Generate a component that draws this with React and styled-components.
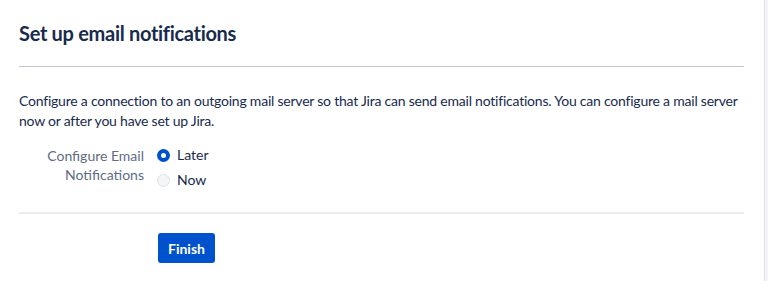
import React from "react";
import styled, { createGlobalStyle } from "styled-components";

const GlobalStyle = createGlobalStyle`
  body {
    margin: 0;
    background: #f4f5f7;
    font-family: Lato, "Liberation Sans", Arial, sans-serif;
    color: #172b4d;
  }
`;

const Card = styled.div`
  width: 765px;
  height: 281px;
  background: #fff;
  border-right: 1px solid #dfe1e6;
  box-sizing: border-box;
  padding: 0 20px 0 19px;
`;

const Header = styled.div`
  height: 67px;
  display: flex;
  align-items: center;
  border-bottom: 1px solid #c1c7d0;
  box-sizing: border-box;
`;

const Title = styled.h2`
  margin: 0;
  font-size: 20px;
  font-weight: 700;
  letter-spacing: -0.3px;
  color: #172b4d;
`;

const Description = styled.p`
  margin: 24px 0 0;
  font-size: 14px;
  line-height: 20px;
  letter-spacing: -0.22px;
`;

const Field = styled.div`
  display: grid;
  grid-template-columns: 125px 1fr;
  column-gap: 13px;
  margin-top: 14px;
  padding-bottom: 22px;
  border-bottom: 2px solid #ebecf0;
`;

const Label = styled.div`
  text-align: right;
  font-size: 14px;
  line-height: 19px;
  color: #5e6c84;
  padding-top: 1px;
`;

const Options = styled.div`
  display: flex;
  flex-direction: column;
  gap: 5px;
`;

const Option = styled.label`
  display: flex;
  align-items: center;
  gap: 7px;
  font-size: 14px;
  line-height: 20px;
  color: #172b4d;
`;

const Radio = styled.span`
  width: 13px;
  height: 13px;
  border-radius: 50%;
  box-sizing: border-box;
  background: ${(p) => (p.checked ? "#0052cc" : "#f4f5f7")};
  border: ${(p) => (p.checked ? "none" : "1px solid #dfe1e6")};
  display: flex;
  align-items: center;
  justify-content: center;
  &::after {
    content: "";
    display: ${(p) => (p.checked ? "block" : "none")};
    width: 5px;
    height: 5px;
    border-radius: 50%;
    background: #fff;
  }
`;

const Actions = styled.div`
  padding: 19px 0 0 139px;
`;

const Button = styled.button`
  height: 30px;
  padding: 0 10px;
  border: none;
  border-radius: 3px;
  background: #0052cc;
  color: #fff;
  font-family: inherit;
  font-size: 14px;
  font-weight: 700;
`;

export default function App() {
  return (
    <>
      <GlobalStyle />
      <Card>
        <Header>
          <Title>Set up email notifications</Title>
        </Header>
        <Description>
          Configure a connection to an outgoing mail server so that Jira can send email
          notifications. You can configure a mail server now or after you have set up Jira.
        </Description>
        <Field>
          <Label>
            Configure Email
            <br />
            Notifications
          </Label>
          <Options>
            <Option>
              <Radio checked />
              Later
            </Option>
            <Option>
              <Radio />
              Now
            </Option>
          </Options>
        </Field>
        <Actions>
          <Button>Finish</Button>
        </Actions>
      </Card>
    </>
  );
}
